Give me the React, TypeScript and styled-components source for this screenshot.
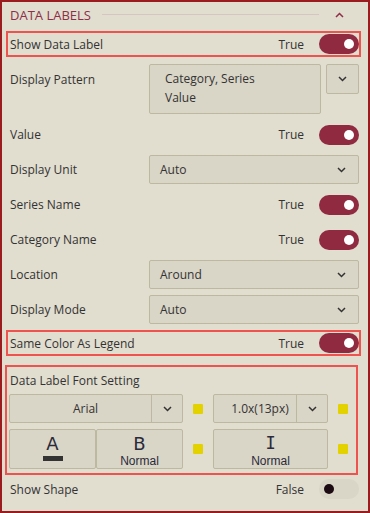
import React from "react";
import styled, { createGlobalStyle } from "styled-components";

const GlobalStyle = createGlobalStyle`
  body {
    margin: 0;
    font-family: "Open Sans", "Noto Sans", sans-serif;
  }
`;

const Chevron = ({ up }: { up?: boolean }) => (
  <svg width="9" height="6" viewBox="0 0 9 6">
    <polyline
      points={up ? "1,5 4.5,1.5 8,5" : "1,1 4.5,4.5 8,1"}
      fill="none"
      stroke="currentColor"
      strokeWidth="1.5"
    />
  </svg>
);

type RowProps = { label: string; value?: string; on?: boolean };

const ToggleRow = ({ label, value, on }: RowProps) => (
  <Row>
    <Label>{label}</Label>
    <Spacer />
    <StateText>{value}</StateText>
    <Toggle $on={on} />
  </Row>
);

const SelectRow = ({ label, value }: RowProps) => (
  <Row>
    <Label>{label}</Label>
    <Select>
      <span>{value}</span>
      <Chevron />
    </Select>
  </Row>
);

export default function App() {
  return (
    <>
      <GlobalStyle />
      <Panel>
        <Header>
          <HeaderTitle>Data Labels</HeaderTitle>
          <HeaderLine />
          <Caret>
            <Chevron up />
          </Caret>
        </Header>

        <HighlightRow>
          <Label>Show Data Label</Label>
          <Spacer />
          <StateText>True</StateText>
          <Toggle $on />
        </HighlightRow>

        <PatternRow>
          <Label $tall>Display Pattern</Label>
          <PatternBox>
            <div>Category, Series</div>
            <div>Value</div>
          </PatternBox>
          <DropButton>
            <Chevron />
          </DropButton>
        </PatternRow>

        <ToggleRow label="Value" value="True" on />
        <SelectRow label="Display Unit" value="Auto" />
        <ToggleRow label="Series Name" value="True" on />
        <ToggleRow label="Category Name" value="True" on />
        <SelectRow label="Location" value="Around" />
        <SelectRow label="Display Mode" value="Auto" />

        <HighlightRow $top={3}>
          <Label>Same Color As Legend</Label>
          <Spacer />
          <StateText>True</StateText>
          <Toggle $on />
        </HighlightRow>

        <FontBox>
          <FontTitle>Data Label Font Setting</FontTitle>
          <ControlLine>
            <ComboSelect $w={174}>
              <ComboValue>Arial</ComboValue>
              <ComboArrow>
                <Chevron />
              </ComboArrow>
            </ComboSelect>
            <Swatch />
            <ComboSelect $w={115}>
              <ComboValue>1.0x(13px)</ComboValue>
              <ComboArrow>
                <Chevron />
              </ComboArrow>
            </ComboSelect>
            <Swatch />
          </ControlLine>
          <ControlLine $top={6}>
            <ButtonGroup>
              <StyleButton>
                <Glyph>A</Glyph>
                <ColorBar />
              </StyleButton>
              <StyleButton>
                <Glyph>B</Glyph>
                <SubText>Normal</SubText>
              </StyleButton>
            </ButtonGroup>
            <Swatch />
            <StyleButton $w={115}>
              <Glyph $mono>I</Glyph>
              <SubText>Normal</SubText>
            </StyleButton>
            <Swatch />
          </ControlLine>
        </FontBox>

        <Row $h={28}>
          <Label>Show Shape</Label>
          <Spacer />
          <StateText>False</StateText>
          <Toggle />
        </Row>
      </Panel>
    </>
  );
}

const Panel = styled.div`
  width: 370px;
  height: 513px;
  box-sizing: border-box;
  border: 2px solid #9b1c1f;
  background: #e1ddcf;
  padding: 0 9px 0 8px;
  display: flex;
  flex-direction: column;
  color: #333;
  font-size: 12px;
`;

const Header = styled.div`
  display: flex;
  align-items: center;
  height: 25px;
  margin-bottom: 4px;
`;

const HeaderTitle = styled.div`
  text-transform: uppercase;
  color: #8d2f47;
  font-size: 13px;
`;

const HeaderLine = styled.div`
  flex: 1;
  height: 1px;
  margin-left: 11px;
  background: #d6c5c0;
`;

const Caret = styled.div`
  width: 40px;
  display: flex;
  justify-content: center;
  color: #8d2f47;
`;

const Row = styled.div<{ $h?: number }>`
  display: flex;
  align-items: center;
  height: ${(p) => p.$h ?? 35}px;
  flex-shrink: 0;
`;

const HighlightRow = styled.div<{ $top?: number }>`
  display: flex;
  align-items: center;
  height: 26px;
  box-sizing: border-box;
  flex-shrink: 0;
  margin: ${(p) => p.$top ?? 0}px -2px 0 -4px;
  padding-left: 2px;
  border: 2px solid #ef5350;
`;

const Label = styled.div<{ $tall?: boolean }>`
  width: 139px;
  flex-shrink: 0;
  white-space: nowrap;
  line-height: ${(p) => (p.$tall ? "32px" : "normal")};
`;

const Spacer = styled.div`
  flex: 1;
`;

const StateText = styled.div`
  margin-right: 15px;
`;

const Toggle = styled.div<{ $on?: boolean }>`
  position: relative;
  width: 40px;
  height: 20px;
  border-radius: 10px;
  background: ${(p) => (p.$on ? "#8f2a40" : "#d9d5c7")};
  &::after {
    content: "";
    position: absolute;
    top: 5px;
    left: ${(p) => (p.$on ? "25px" : "5px")};
    width: 10px;
    height: 10px;
    border-radius: 50%;
    background: ${(p) => (p.$on ? "#ffffff" : "#1c0b12")};
  }
`;

const Select = styled.div`
  flex: 1;
  height: 29px;
  box-sizing: border-box;
  display: flex;
  align-items: center;
  justify-content: space-between;
  padding: 0 12px 0 10px;
  background: #d9d5c7;
  border: 1px solid #bdb8a0;
  border-radius: 2px;
`;

const PatternRow = styled.div`
  display: flex;
  align-items: flex-start;
  margin-top: 7px;
  margin-bottom: 3px;
  flex-shrink: 0;
`;

const PatternBox = styled.div`
  width: 172px;
  height: 50px;
  box-sizing: border-box;
  padding: 4px 0 0 15px;
  line-height: 19px;
  background: #d9d5c7;
  border: 1px solid #bdb8a0;
  border-radius: 2px;
`;

const DropButton = styled.div`
  width: 33px;
  height: 30px;
  margin-left: 5px;
  box-sizing: border-box;
  display: flex;
  align-items: center;
  justify-content: center;
  background: #d9d5c7;
  border: 1px solid #bdb8a0;
  border-radius: 2px;
`;

const FontBox = styled.div`
  margin: 9px 1px 0 -5px;
  border: 2px solid #ef5350;
  padding: 0 0 4px 2px;
  flex-shrink: 0;
`;

const FontTitle = styled.div`
  height: 27px;
  line-height: 27px;
  padding-left: 1px;
`;

const ControlLine = styled.div<{ $top?: number }>`
  display: flex;
  align-items: center;
  gap: 10px;
  margin-top: ${(p) => p.$top ?? 0}px;
`;

const ComboSelect = styled.div<{ $w: number }>`
  width: ${(p) => p.$w}px;
  height: 29px;
  box-sizing: border-box;
  display: flex;
  background: #d9d5c7;
  border: 1px solid #bdb8a0;
  border-radius: 2px;
`;

const ComboValue = styled.div`
  flex: 1;
  display: flex;
  align-items: center;
  justify-content: center;
  padding-left: 10px;
  border-right: 1px solid #bdb8a0;
`;

const ComboArrow = styled.div`
  width: 30px;
  display: flex;
  align-items: center;
  justify-content: center;
`;

const Swatch = styled.div`
  width: 10px;
  height: 10px;
  border-radius: 1px;
  background: #e3d200;
`;

const ButtonGroup = styled.div`
  display: flex;
  width: 174px;
`;

const StyleButton = styled.div<{ $w?: number }>`
  width: ${(p) => (p.$w ? `${p.$w}px` : "50%")};
  height: 40px;
  box-sizing: border-box;
  display: flex;
  flex-direction: column;
  align-items: center;
  justify-content: flex-start;
  padding-top: 3px;
  background: #d9d5c7;
  border: 1px solid #bdb8a0;
  border-radius: 2px;
`;

const Glyph = styled.div<{ $mono?: boolean }>`
  font-family: ${(p) =>
    p.$mono ? '"DejaVu Sans Mono", monospace' : '"DejaVu Sans", sans-serif'};
  font-size: ${(p) => (p.$mono ? 17 : 18)}px;
  line-height: 21px;
  height: 21px;
  color: #2a2a3a;
`;

const SubText = styled.div`
  font-family: "Liberation Sans", Arial, sans-serif;
  font-size: 12px;
  line-height: 14px;
  color: #2a2a3a;
`;

const ColorBar = styled.div`
  width: 20px;
  height: 5px;
  margin-top: 2px;
  background: #333;
`;
